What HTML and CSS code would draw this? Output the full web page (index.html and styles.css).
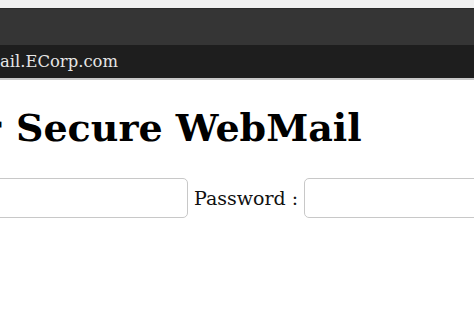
FILE: index.html
```html
<!DOCTYPE html>
<html>
<head>
<meta charset="utf-8">
<link rel="stylesheet" href="styles.css">
</head>
<body>
<div class="chrome">
  <div class="topstrip"></div>
  <div class="tabbar"></div>
  <div class="urlbar"><span class="url">ail.ECorp.com</span></div>
</div>
<div class="page">
  <h1 class="title"><span class="pre"><span class="pre-word">Your</span></span><span class="main">Secure WebMail</span></h1>
  <form class="login">
    <input class="field user" type="text">
    <label class="lbl">Password :</label>
    <input class="field pass" type="password">
  </form>
</div>
</body>
</html>
```
FILE: styles.css
```css
html, body { margin: 0; padding: 0; background: #fff; overflow: hidden; }
body { width: 474px; height: 318px; font-family: "DejaVu Serif", serif; }
.chrome { display: flex; flex-direction: column; }
.topstrip { height: 8px; background: #f0f0f0; }
.tabbar { height: 37px; background: #353535; border-top: 1px solid #2a2a2a; box-sizing: border-box; }
.urlbar { height: 33px; background: #1e1e1e; display: flex; align-items: center; border-bottom: 2px solid #c8c8c8; }
.url { color: #e6e6e6; font-family: "DejaVu Serif", serif; font-size: 16.4px; padding-left: 0; }
.page { white-space: nowrap; overflow: hidden; }
.title { display: flex; font-family: "DejaVu Serif", serif; font-weight: bold; font-size: 38px; margin: 26px 0 0 0; line-height: 44px; color: #000; }
.pre { display: flex; justify-content: flex-end; flex: 0 0 16px; overflow: hidden; }
.pre-word { flex-shrink: 0; margin-right: 15px; }
.main { flex-shrink: 0; }
.login { display: flex; align-items: center; margin: 28px 0 0 -120px; gap: 6px; }
.field { flex-shrink: 0; width: 308px; height: 40px; box-sizing: border-box; border: 1px solid #c8c8c8; border-radius: 5px; background: #fff; margin: 0; }
.lbl { flex-shrink: 0; font-size: 19px; color: #111; }
.pass { width: 200px; }
```
